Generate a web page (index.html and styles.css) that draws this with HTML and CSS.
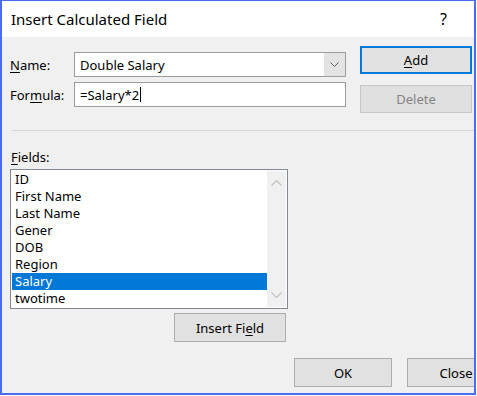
FILE: index.html
```html
<!DOCTYPE html>
<html lang="en">
<head>
    <meta charset="UTF-8">
    <title>Insert Calculated Field</title>
    <link rel="stylesheet" href="styles.css">
</head>
<body>
<div class="dialog">
    <div class="titlebar">
        <span class="title">Insert Calculated Field</span>
        <span class="help">?</span>
    </div>
    <div class="content">
        <div class="top-row">
            <div class="form">
                <div class="form-row">
                    <label class="label"><u>N</u>ame:</label>
                    <div class="combo">
                        <span class="combo-text">Double Salary</span>
                        <span class="combo-btn">
                            <svg width="9" height="5" viewBox="0 0 9 5"><polyline points="0.5,0.5 4.5,4.5 8.5,0.5" fill="none" stroke="#606060" stroke-width="1"/></svg>
                        </span>
                    </div>
                </div>
                <div class="form-row">
                    <label class="label">For<u>m</u>ula:</label>
                    <div class="textbox">=Salary*2<span class="caret"></span></div>
                </div>
            </div>
            <div class="side-buttons">
                <button class="btn btn-default"><u>A</u>dd</button>
                <button class="btn btn-disabled">Delete</button>
            </div>
        </div>
        <div class="separator"></div>
        <div class="fields-label"><u>F</u>ields:</div>
        <div class="listbox">
            <ul class="items">
                <li>ID</li>
                <li>First Name</li>
                <li>Last Name</li>
                <li>Gener</li>
                <li>DOB</li>
                <li>Region</li>
                <li class="selected">Salary</li>
                <li>twotime</li>
            </ul>
            <div class="scrollbar">
                <svg width="11" height="6" viewBox="0 0 11 6"><polyline points="0.5,5.5 5.5,0.5 10.5,5.5" fill="none" stroke="#c2c2c2" stroke-width="1.2"/></svg>
                <svg width="11" height="6" viewBox="0 0 11 6"><polyline points="0.5,0.5 5.5,5.5 10.5,0.5" fill="none" stroke="#c2c2c2" stroke-width="1.2"/></svg>
            </div>
        </div>
        <div class="insert-row">
            <button class="btn btn-insert">Insert Fi<u>e</u>ld</button>
        </div>
        <div class="footer">
            <button class="btn btn-footer">OK</button>
            <button class="btn btn-footer">Close</button>
        </div>
    </div>
</div>
</body>
</html>
```

FILE: styles.css
```css
*{
    margin: 0;
    padding: 0;
    box-sizing: border-box;
}
html,body{
    width: 100%;
    height: 100%;
    background: #ffffff;
}
body{
    font-family: "Noto Sans", "DejaVu Sans", sans-serif;
    font-size: 13px;
    color: #000000;
}
u{
    text-decoration-thickness: 1px;
    text-underline-offset: 2px;
}
.dialog{
    width: 476px;
    height: 395px;
    border: 2px solid #4a6cf2;
    border-top-width: 1px;
    overflow: hidden;
    background: #f0f0f0;
}
.titlebar{
    height: 36px;
    background: #ffffff;
    display: flex;
    align-items: center;
    justify-content: space-between;
    padding: 0 27px 0 9px;
}
.title{
    font-size: 15px;
}
.help{
    font-size: 16px;
}
.content{
    padding: 9px 0 0 8px;
}
.top-row{
    display: flex;
    height: 68px;
}
.form{
    width: 336px;
    padding-top: 6px;
}
.form-row{
    display: flex;
    align-items: center;
    height: 25px;
    margin-bottom: 5px;
}
.label{
    width: 64px;
}
.combo,.textbox{
    width: 272px;
    height: 25px;
    border: 1px solid #9c9c9c;
    background: #ffffff;
    display: flex;
    align-items: center;
    padding-left: 5px;
}
.combo-text{
    flex: 1;
}
.combo-btn{
    width: 21px;
    height: 23px;
    background: #e3e3e3;
    display: flex;
    align-items: center;
    justify-content: center;
}
.caret{
    display: inline-block;
    width: 1px;
    height: 15px;
    background: #000000;
    margin-left: 1px;
}
.side-buttons{
    display: flex;
    flex-direction: column;
    gap: 11px;
    margin-left: 14px;
}
.btn{
    font-family: "Noto Sans", "DejaVu Sans", sans-serif;
    font-size: 13px;
    color: #000000;
    background: #e1e1e1;
    border: 1px solid #adadad;
    width: 112px;
    height: 28px;
}
.btn-default{
    border: 2px solid #0078d7;
}
.btn-disabled{
    background: #e0e0e0;
    border-color: #c6c6c6;
    color: #838383;
}
.separator{
    height: 1px;
    background: #d8d8d8;
    margin: 16px 0 0 2px;
}
.fields-label{
    margin: 16px 0 0 1px;
    height: 20px;
    line-height: 20px;
}
.listbox{
    margin-top: 2px;
    width: 278px;
    height: 140px;
    border: 1px solid #828790;
    background: #ffffff;
    display: flex;
    padding: 1px;
}
.items{
    list-style: none;
    flex: 1;
}
.items li{
    height: 17px;
    line-height: 17px;
    padding-left: 3px;
}
.items li.selected{
    background: #0078d7;
    color: #ffffff;
}
.scrollbar{
    width: 19px;
    background: #f0f0f0;
    display: flex;
    flex-direction: column;
    justify-content: space-between;
    align-items: center;
    padding: 9px 0 9px;
}
.insert-row{
    padding: 4px 0 0 164px;
}
.btn-insert{
    height: 29px;
}
.footer{
    display: flex;
    gap: 15px;
    padding: 16px 0 0 284px;
}
.btn-footer{
    width: 98px;
    height: 29px;
    flex-shrink: 0;
}
```
